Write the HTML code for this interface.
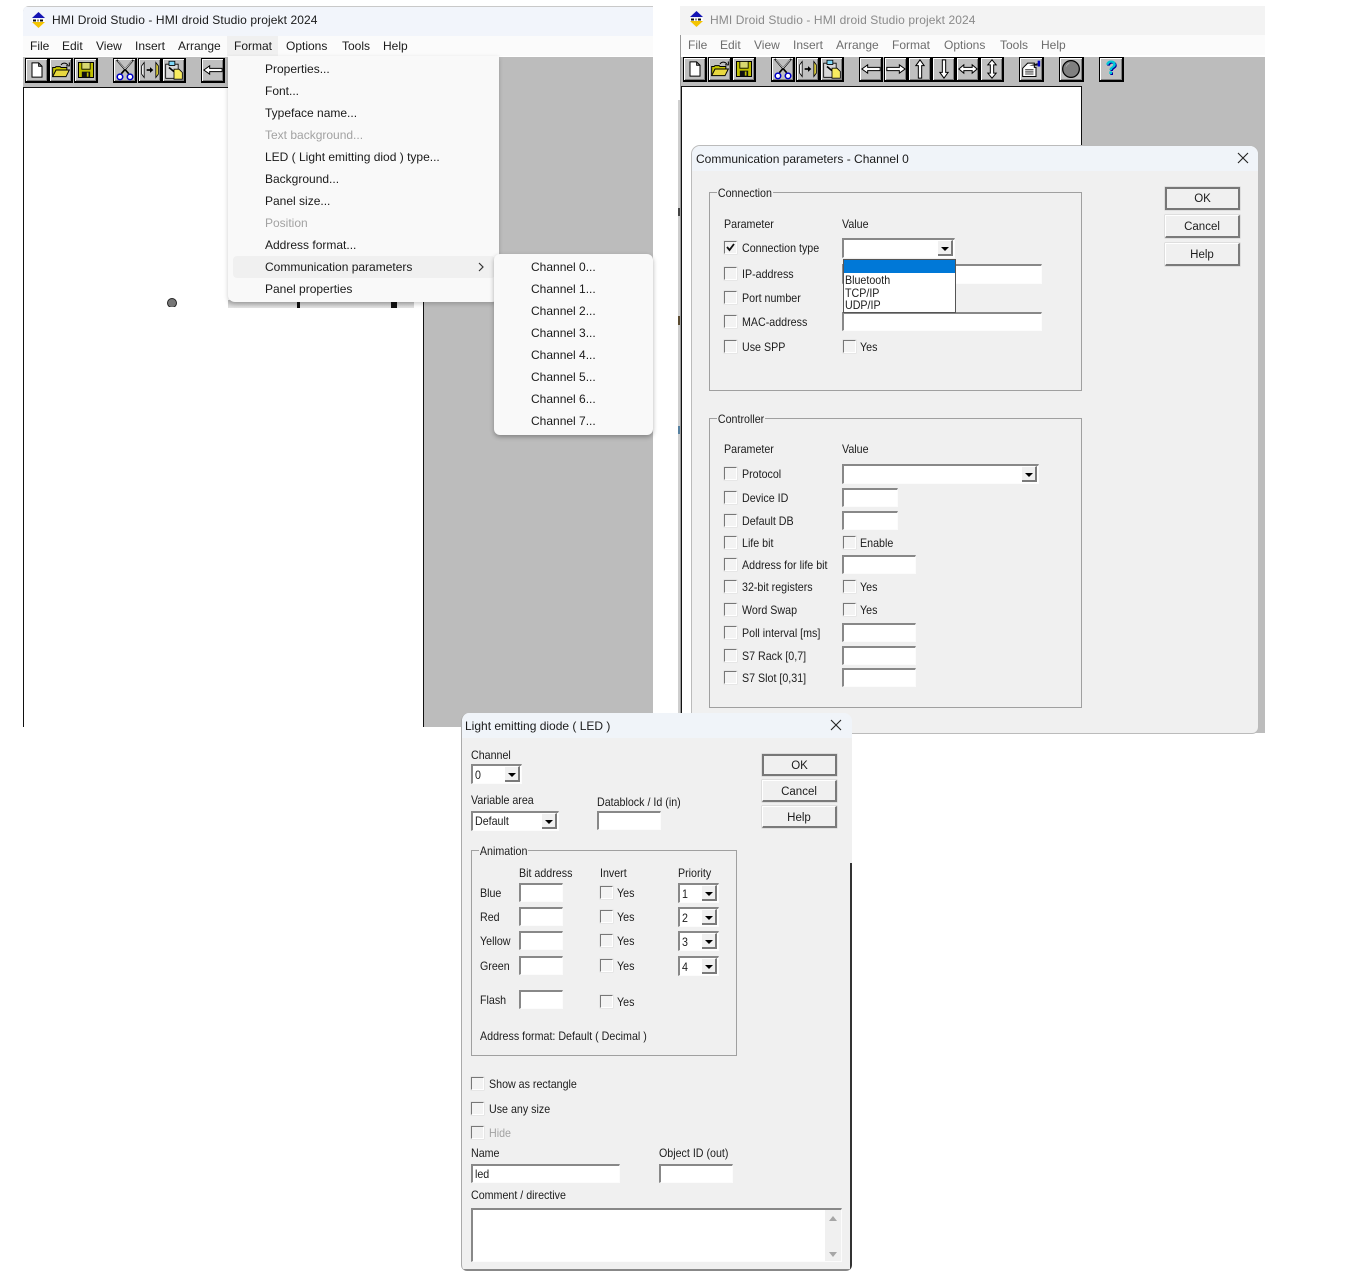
<!DOCTYPE html>
<html><head><meta charset="utf-8"><title>HMI Droid Studio</title>
<style>
html,body{margin:0;padding:0;background:#fff}
body{position:relative;width:1368px;height:1281px;overflow:hidden;font-family:"Liberation Sans",sans-serif;color:#111}
div,i,b,svg{position:absolute;display:block}
i{font-style:normal;font-size:12px;line-height:14px;white-space:nowrap;transform-origin:0 50%;transform:scaleX(.89);color:#1c1c1c}
i.m{font-size:12px;color:#1a1a1a;transform:none}
i.g{color:#6d6d6d}
i.d{color:#a2a2a2}
i.tt{letter-spacing:.1px}
.in{background:#fff;border-top:2px solid #888;border-left:2px solid #888;border-right:1px solid #fcfcfc;border-bottom:1px solid #fcfcfc;box-sizing:border-box}
.ar{right:1px;top:0;bottom:1px;width:15px;background:#f0f0f0;border-right:2px solid #7a7a7a;border-bottom:2px solid #7a7a7a;border-top:1px solid #fff;box-sizing:border-box}
.ar:after{content:"";position:absolute;left:3px;top:6px;border-left:4px solid transparent;border-right:4px solid transparent;border-top:4px solid #000}
.cb{width:13px;height:13px;box-sizing:border-box;background:#f3f3f3;border-top:1px solid #777;border-left:1px solid #777;border-right:1px solid #fff;border-bottom:1px solid #fff;box-shadow:0 0 0 .5px #ddd}
.grp{border:1px solid #a0a0a0;box-sizing:border-box}
i.lab{background:#f0f0f0;padding:0 1px}
.btn{background:#f0f0f0;border-top:1px solid #fff;border-left:1px solid #fff;border-right:2px solid #7a7a7a;border-bottom:2px solid #7a7a7a;box-sizing:border-box;box-shadow:0 0 0 .5px #ccc;text-align:center;font-size:11.5px;line-height:23px;color:#1c1c1c}
.ok{border:2px solid #777;line-height:21px}
.t{width:24px;height:25px;background:#c0c0c0;border:1px solid #000;border-right-width:2px;border-bottom-width:2px;box-sizing:border-box;box-shadow:inset 1px 1px 0 #fff,inset -1px -1px 0 #7f7f7f}
.t svg{left:1px;top:1px;width:20px;height:20px}
.t svg.big{left:0;top:0;width:22px;height:22px}
</style></head>
<body>
<svg width="0" height="0" style="left:0;top:0">
<defs>
<symbol id="new" viewBox="0 0 24 24"><path d="M6 3.500h8l4 4v13H6zM14 3.500v4h4" fill="#fff" stroke="#000" stroke-width="1.200"/></symbol>
<symbol id="open" viewBox="0 0 24 24"><path d="M2 20V9h3l1-1h5l1 1h7v3" fill="#c8c800" stroke="#000" stroke-width="1.200"/><path d="M2 20l4-8h16l-4 8z" fill="#e8d840" stroke="#000" stroke-width="1.200"/><path d="M12 6c2-3 6-3 8 0m2-3v4h-4" fill="none" stroke="#000" stroke-width="1.200"/></symbol>
<symbol id="save" viewBox="0 0 24 24"><path d="M3 3h18v18H3z" fill="#c0c000" stroke="#000" stroke-width="1.200"/><path d="M7 3h10v8H7z" fill="#d8d870" stroke="#000"/><path d="M7 14h10v7H7z" fill="#111"/><path d="M13 15h2v5h-2z" fill="#c0c000"/></symbol>
<symbol id="cut" viewBox="0 0 24 24"><path d="M3 1l13 15M21 1L8 16" stroke="#000" stroke-width="1.800" fill="none"/><path d="M4 2l8 9M20 2l-8 9" stroke="#fff" stroke-width=".7" fill="none"/><circle cx="6.500" cy="19.500" r="3" fill="#fff" stroke="#0000c8" stroke-width="1.700"/><circle cx="17.500" cy="19.500" r="3" fill="#fff" stroke="#0000c8" stroke-width="1.700"/></symbol>
<symbol id="align" viewBox="0 0 24 24"><path d="M5 3v18l-3-4V7z" fill="#fff" stroke="#000"/><path d="M19 3v18l3-4V7z" fill="#e8d840" stroke="#000"/><path d="M8 12h5" stroke="#000" stroke-width="2"/><path d="M12 8.500l4 3.500-4 3.500z" fill="#000"/></symbol>
<symbol id="paste" viewBox="0 0 24 24"><path d="M2 5h15v17H2z" fill="#d8d8d8" stroke="#000"/><path d="M6 1.500h7v5H6z" fill="#7fd8f8" stroke="#000"/><path d="M6 9l6 5" stroke="#000" stroke-width="2"/><path d="M12 11h6l4 4v8H12z" fill="#f8ec60" stroke="#000"/></symbol>
<symbol id="al" viewBox="0 0 24 24"><path d="M1 12l7-5v3h15v4H8v3z" fill="#fff" stroke="#000" stroke-width="1.200"/></symbol>
<symbol id="ar" viewBox="0 0 24 24"><path d="M23 12l-7-5v3H1v4h15v3z" fill="#fff" stroke="#000" stroke-width="1.200"/></symbol>
<symbol id="au" viewBox="0 0 24 24"><path d="M12 1L7 8h3v15h4V8h3z" fill="#fff" stroke="#000" stroke-width="1.200"/></symbol>
<symbol id="ad" viewBox="0 0 24 24"><path d="M12 23l-5-7h3V1h4v15h3z" fill="#fff" stroke="#000" stroke-width="1.200"/></symbol>
<symbol id="ah" viewBox="0 0 24 24"><path d="M1 12l6-5v3h10V7l6 5-6 5v-3H7v3z" fill="#fff" stroke="#000" stroke-width="1.200"/></symbol>
<symbol id="av" viewBox="0 0 24 24"><path d="M12 1L7 7h3v10H7l5 6 5-6h-3V7h3z" fill="#fff" stroke="#000" stroke-width="1.200"/></symbol>
<symbol id="prop" viewBox="0 0 24 24"><path d="M2 11l6-6h8v5h2v11H2z" fill="#fff" stroke="#000" stroke-width="1.200"/><path d="M5 13h10M5 15.500h10M5 18h10" stroke="#000"/><path d="M10 8l10-3v3z" fill="#111"/><path d="M20 2h3v7h-3z" fill="#0000c8"/></symbol>
<symbol id="circ" viewBox="0 0 24 24"><circle cx="12" cy="12" r="10" fill="#808080" stroke="#000" stroke-width="1.500"/><path d="M6 9c1-2 2-3 4-4" stroke="#bbb" fill="none"/></symbol>
<symbol id="logo" viewBox="0 0 15 16"><path d="M7.500 0L14 6H1z" fill="#1414b4"/><path d="M1 7h13v3H1z" fill="#fff"/><path d="M2 7.500h3v2H2zM9 7.500h3v2H9zM6.500 7.500h1v2h-1z" fill="#111"/><path d="M1 10h13L7.500 16z" fill="#f4c400"/></symbol>
</defs>
</svg>

<!-- WINDOW 1 -->
<div style="left:23px;top:6px;width:630px;height:721px;background:#bcbcbc;border-radius:6px 0 0 0;overflow:hidden">
 <div style="left:0;top:0;width:630px;height:30px;background:#f2f5fb;border-top:1px solid #c9c9c9;box-sizing:border-box"></div>
 <div style="left:0;top:30px;width:630px;height:20px;background:#fbfbfb"></div>
 <div style="left:0;top:50px;width:630px;height:1px;background:#fff"></div>
 <div style="left:0;top:81px;width:401px;height:640px;background:#fff;border-left:1px solid #111;border-top:1px solid #111;border-right:1px solid #111;box-sizing:border-box"></div>
 <div style="left:204px;top:30px;width:51px;height:20px;background:#f0f0f0"></div>
</div>
<svg style="left:31px;top:12px" width="15" height="16"><use href="#logo"/></svg>
<i class="m tt" style="left:52px;top:13px">HMI Droid Studio - HMI droid Studio projekt 2024</i>
<i class="m" style="left:30px;top:39px">File</i><i class="m" style="left:62px;top:39px">Edit</i><i class="m" style="left:96px;top:39px">View</i><i class="m" style="left:135px;top:39px">Insert</i><i class="m" style="left:178px;top:39px">Arrange</i><i class="m" style="left:234px;top:39px">Format</i><i class="m" style="left:286px;top:39px">Options</i><i class="m" style="left:342px;top:39px">Tools</i><i class="m" style="left:383px;top:39px">Help</i>

<div class="t" style="left:25px;top:58px"><svg><use href="#new"/></svg></div>
<div class="t" style="left:49px;top:58px"><svg><use href="#open"/></svg></div>
<div class="t" style="left:74px;top:58px"><svg><use href="#save"/></svg></div>
<div class="t" style="left:113px;top:58px"><svg class="big"><use href="#cut"/></svg></div>
<div class="t" style="left:138px;top:58px"><svg><use href="#align"/></svg></div>
<div class="t" style="left:162px;top:58px"><svg><use href="#paste"/></svg></div>
<div class="t" style="left:201px;top:58px"><svg><use href="#al"/></svg></div>

<!-- stray canvas marks below menu -->
<svg style="left:167px;top:298px" width="11" height="9"><circle cx="5" cy="5" r="4.500" fill="#777" stroke="#222"/></svg>
<div style="left:228px;top:300px;width:186px;height:8px;background:linear-gradient(#b8b8b8,#e4e4e4)"></div>
<div style="left:297px;top:302px;width:3px;height:6px;background:#111"></div>
<div style="left:391px;top:302px;width:6px;height:6px;background:#111"></div>

<!-- MENU -->
<div style="left:228px;top:56px;width:271px;height:246px;background:#f9f9f9;border-radius:0 0 7px 7px;box-shadow:0 2px 5px rgba(0,0,0,.2)"></div>
<div style="left:233px;top:256px;width:262px;height:22px;background:#f0f0f0;border-radius:4px"></div>
<i class="m" style="left:265px;top:62px">Properties...</i>
<i class="m" style="left:265px;top:84px">Font...</i>
<i class="m" style="left:265px;top:106px">Typeface name...</i>
<i class="m d" style="left:265px;top:128px">Text background...</i>
<i class="m" style="left:265px;top:150px">LED ( Light emitting diod ) type...</i>
<i class="m" style="left:265px;top:172px">Background...</i>
<i class="m" style="left:265px;top:194px">Panel size...</i>
<i class="m d" style="left:265px;top:216px">Position</i>
<i class="m" style="left:265px;top:238px">Address format...</i>
<i class="m" style="left:265px;top:260px">Communication parameters</i>
<i class="m" style="left:265px;top:282px">Panel properties</i>
<svg style="left:477px;top:262px" width="8" height="10"><path d="M2 1l4 4-4 4" fill="none" stroke="#333" stroke-width="1.200"/></svg>

<!-- SUBMENU -->
<div style="left:494px;top:254px;width:159px;height:181px;background:#f9f9f9;border-radius:6px;box-shadow:0 2px 5px rgba(0,0,0,.3)"></div>
<i class="m" style="left:531px;top:260px">Channel 0...</i>
<i class="m" style="left:531px;top:282px">Channel 1...</i>
<i class="m" style="left:531px;top:304px">Channel 2...</i>
<i class="m" style="left:531px;top:326px">Channel 3...</i>
<i class="m" style="left:531px;top:348px">Channel 4...</i>
<i class="m" style="left:531px;top:370px">Channel 5...</i>
<i class="m" style="left:531px;top:392px">Channel 6...</i>
<i class="m" style="left:531px;top:414px">Channel 7...</i>

<!-- WINDOW 2 -->
<div style="left:678px;top:100px;width:3px;height:633px;background:#cfcfcf"></div>
<div style="left:678px;top:208px;width:2px;height:8px;background:#444"></div>
<div style="left:678px;top:316px;width:2px;height:9px;background:#5a4a30"></div>
<div style="left:678px;top:426px;width:2px;height:8px;background:#5580a0"></div>
<div style="left:680px;top:6px;width:585px;height:727px;background:#bcbcbc;overflow:hidden">
 <div style="left:0;top:0;width:585px;height:29px;background:#f3f3f3"></div>
 <div style="left:0;top:29px;width:585px;height:20px;background:#fbfbfb"></div>
 <div style="left:0;top:49px;width:585px;height:2px;background:#fff"></div>
 <div style="left:1px;top:80px;width:401px;height:647px;background:#fff;border-top:1px solid #111;border-left:1px solid #111;border-right:1px solid #111;box-sizing:border-box"></div>
 <div style="left:0;top:29px;width:1px;height:698px;background:#999"></div>
</div>
<svg style="left:689px;top:11px" width="15" height="16"><use href="#logo"/></svg>
<i class="m tt" style="left:710px;top:13px;color:#8a8a8a">HMI Droid Studio - HMI droid Studio projekt 2024</i>
<i class="m g" style="left:688px;top:38px">File</i><i class="m g" style="left:720px;top:38px">Edit</i><i class="m g" style="left:754px;top:38px">View</i><i class="m g" style="left:793px;top:38px">Insert</i><i class="m g" style="left:836px;top:38px">Arrange</i><i class="m g" style="left:892px;top:38px">Format</i><i class="m g" style="left:944px;top:38px">Options</i><i class="m g" style="left:1000px;top:38px">Tools</i><i class="m g" style="left:1041px;top:38px">Help</i>

<div class="t" style="left:683px;top:57px"><svg><use href="#new"/></svg></div>
<div class="t" style="left:708px;top:57px"><svg><use href="#open"/></svg></div>
<div class="t" style="left:732px;top:57px"><svg><use href="#save"/></svg></div>
<div class="t" style="left:771px;top:57px"><svg class="big"><use href="#cut"/></svg></div>
<div class="t" style="left:796px;top:57px"><svg><use href="#align"/></svg></div>
<div class="t" style="left:820px;top:57px"><svg><use href="#paste"/></svg></div>
<div class="t" style="left:859px;top:57px"><svg><use href="#al"/></svg></div>
<div class="t" style="left:884px;top:57px"><svg><use href="#ar"/></svg></div>
<div class="t" style="left:908px;top:57px"><svg><use href="#au"/></svg></div>
<div class="t" style="left:932px;top:57px"><svg><use href="#ad"/></svg></div>
<div class="t" style="left:956px;top:57px"><svg><use href="#ah"/></svg></div>
<div class="t" style="left:980px;top:57px"><svg><use href="#av"/></svg></div>
<div class="t" style="left:1019px;top:57px;width:25px"><svg><use href="#prop"/></svg></div>
<div class="t" style="left:1059px;top:57px;width:25px"><svg><use href="#circ"/></svg></div>
<div class="t" style="left:1099px;top:57px;width:25px"><b style="left:0;top:0;width:22px;text-align:center;font-size:19px;line-height:22px;color:#00c8d8;text-shadow:1px 1px 0 #0000a0">?</b></div>

<!-- DIALOG COMM -->
<div style="left:692px;top:146px;width:566px;height:587px;background:#f0f0f0;border-radius:8px 8px 6px 6px;overflow:hidden;box-shadow:0 0 0 1px #bbb">
 <div style="left:0;top:0;width:566px;height:25px;background:#f0f4f9"></div>
</div>
<i class="m" style="left:696px;top:152px">Communication parameters - Channel 0</i>
<svg style="left:1237px;top:152px" width="12" height="12"><path d="M1 1l10 10M11 1L1 11" stroke="#222" stroke-width="1.100"/></svg>

<div class="grp" style="left:709px;top:192px;width:373px;height:199px"></div>
<i class="lab" style="left:717px;top:186px">Connection</i>
<i style="left:724px;top:217px">Parameter</i><i style="left:842px;top:217px">Value</i>
<div class="cb" style="left:724px;top:241px"></div>
<svg style="left:725px;top:242px" width="11" height="11"><path d="M2 5l2.500 3L9 2" fill="none" stroke="#111" stroke-width="1.800"/></svg>
<i style="left:742px;top:241px">Connection type</i>
<div class="cb" style="left:724px;top:267px"></div><i style="left:742px;top:267px">IP-address</i>
<div class="cb" style="left:724px;top:291px"></div><i style="left:742px;top:291px">Port number</i>
<div class="cb" style="left:724px;top:315px"></div><i style="left:742px;top:315px">MAC-address</i>
<div class="cb" style="left:724px;top:340px"></div><i style="left:742px;top:340px">Use SPP</i>
<div class="cb" style="left:843px;top:340px"></div><i style="left:860px;top:340px">Yes</i>
<div class="in" style="left:842px;top:264px;width:200px;height:20px"></div>
<div class="in" style="left:842px;top:312px;width:200px;height:19px"></div>
<div class="in" style="left:842px;top:238px;width:113px;height:20px"><div class="ar"></div></div>
<div style="left:843px;top:259px;width:113px;height:54px;background:#fff;border:1px solid #555;box-sizing:border-box"></div>
<div style="left:844px;top:260px;width:111px;height:13px;background:#0078d7"></div>
<i style="left:845px;top:273px">Bluetooth</i>
<i style="left:845px;top:286px">TCP/IP</i>
<i style="left:845px;top:298px">UDP/IP</i>

<div class="grp" style="left:709px;top:418px;width:373px;height:290px"></div>
<i class="lab" style="left:717px;top:412px">Controller</i>
<i style="left:724px;top:442px">Parameter</i><i style="left:842px;top:442px">Value</i>
<div class="cb" style="left:724px;top:467px"></div><i style="left:742px;top:467px">Protocol</i>
<div class="cb" style="left:724px;top:491px"></div><i style="left:742px;top:491px">Device ID</i>
<div class="cb" style="left:724px;top:514px"></div><i style="left:742px;top:514px">Default DB</i>
<div class="cb" style="left:724px;top:536px"></div><i style="left:742px;top:536px">Life bit</i>
<div class="cb" style="left:724px;top:558px"></div><i style="left:742px;top:558px">Address for life bit</i>
<div class="cb" style="left:724px;top:580px"></div><i style="left:742px;top:580px">32-bit registers</i>
<div class="cb" style="left:724px;top:603px"></div><i style="left:742px;top:603px">Word Swap</i>
<div class="cb" style="left:724px;top:626px"></div><i style="left:742px;top:626px">Poll interval [ms]</i>
<div class="cb" style="left:724px;top:649px"></div><i style="left:742px;top:649px">S7 Rack [0,7]</i>
<div class="cb" style="left:724px;top:671px"></div><i style="left:742px;top:671px">S7 Slot [0,31]</i>
<div class="in" style="left:842px;top:464px;width:197px;height:20px"><div class="ar"></div></div>
<div class="in" style="left:842px;top:488px;width:56px;height:19px"></div>
<div class="in" style="left:842px;top:511px;width:56px;height:19px"></div>
<div class="cb" style="left:843px;top:536px"></div><i style="left:860px;top:536px">Enable</i>
<div class="in" style="left:842px;top:555px;width:74px;height:19px"></div>
<div class="cb" style="left:843px;top:580px"></div><i style="left:860px;top:580px">Yes</i>
<div class="cb" style="left:843px;top:603px"></div><i style="left:860px;top:603px">Yes</i>
<div class="in" style="left:842px;top:623px;width:74px;height:19px"></div>
<div class="in" style="left:842px;top:646px;width:74px;height:19px"></div>
<div class="in" style="left:842px;top:668px;width:74px;height:19px"></div>

<div class="btn ok" style="left:1165px;top:187px;width:75px;height:23px">OK</div>
<div class="btn" style="left:1165px;top:215px;width:75px;height:23px">Cancel</div>
<div class="btn" style="left:1165px;top:243px;width:75px;height:23px">Help</div>

<!-- DIALOG LED -->
<div style="left:461px;top:713px;width:391px;height:558px;background:#f0f0f0;border-radius:8px 8px 6px 6px;overflow:hidden;border-left:1px solid #aaa;box-sizing:border-box">
 <div style="left:0;top:0;width:391px;height:25px;background:#f0f4f9"></div>
 <div style="left:388px;top:150px;width:2px;height:408px;background:#333"></div>
 <div style="left:0;top:556px;width:391px;height:2px;background:#888"></div>
</div>
<i class="m" style="left:465px;top:719px">Light emitting diode ( LED )</i>
<svg style="left:830px;top:719px" width="12" height="12"><path d="M1 1l10 10M11 1L1 11" stroke="#222" stroke-width="1.100"/></svg>

<i style="left:471px;top:748px">Channel</i>
<div class="in" style="left:471px;top:764px;width:51px;height:20px"><div class="ar"></div></div><i style="left:475px;top:768px">0</i>
<i style="left:471px;top:793px">Variable area</i>
<div class="in" style="left:471px;top:811px;width:88px;height:20px"><div class="ar"></div></div><i style="left:475px;top:814px">Default</i>
<i style="left:597px;top:795px">Datablock / Id (in)</i>
<div class="in" style="left:597px;top:811px;width:64px;height:19px"></div>
<div class="btn ok" style="left:762px;top:754px;width:75px;height:22px">OK</div>
<div class="btn" style="left:762px;top:780px;width:75px;height:22px">Cancel</div>
<div class="btn" style="left:762px;top:806px;width:75px;height:22px">Help</div>

<div class="grp" style="left:471px;top:850px;width:266px;height:206px"></div>
<i class="lab" style="left:479px;top:844px">Animation</i>
<i style="left:519px;top:866px">Bit address</i><i style="left:600px;top:866px">Invert</i><i style="left:678px;top:866px">Priority</i>
<i style="left:480px;top:886px">Blue</i><i style="left:480px;top:910px">Red</i><i style="left:480px;top:934px">Yellow</i><i style="left:480px;top:959px">Green</i><i style="left:480px;top:993px">Flash</i>
<div class="in" style="left:519px;top:883px;width:44px;height:19px"></div>
<div class="in" style="left:519px;top:907px;width:44px;height:19px"></div>
<div class="in" style="left:519px;top:931px;width:44px;height:19px"></div>
<div class="in" style="left:519px;top:956px;width:44px;height:19px"></div>
<div class="in" style="left:519px;top:990px;width:44px;height:19px"></div>
<div class="cb" style="left:600px;top:886px"></div><i style="left:617px;top:886px">Yes</i>
<div class="cb" style="left:600px;top:910px"></div><i style="left:617px;top:910px">Yes</i>
<div class="cb" style="left:600px;top:934px"></div><i style="left:617px;top:934px">Yes</i>
<div class="cb" style="left:600px;top:959px"></div><i style="left:617px;top:959px">Yes</i>
<div class="cb" style="left:600px;top:995px"></div><i style="left:617px;top:995px">Yes</i>
<div class="in" style="left:678px;top:883px;width:41px;height:20px"><div class="ar"></div></div><i style="left:682px;top:887px">1</i>
<div class="in" style="left:678px;top:907px;width:41px;height:20px"><div class="ar"></div></div><i style="left:682px;top:911px">2</i>
<div class="in" style="left:678px;top:931px;width:41px;height:20px"><div class="ar"></div></div><i style="left:682px;top:935px">3</i>
<div class="in" style="left:678px;top:956px;width:41px;height:20px"><div class="ar"></div></div><i style="left:682px;top:960px">4</i>
<i style="left:480px;top:1029px">Address format: Default ( Decimal )</i>

<div class="cb" style="left:471px;top:1077px"></div><i style="left:489px;top:1077px">Show as rectangle</i>
<div class="cb" style="left:471px;top:1102px"></div><i style="left:489px;top:1102px">Use any size</i>
<div class="cb" style="left:471px;top:1126px;background:#f0f0f0"></div><i class="d" style="left:489px;top:1126px">Hide</i>
<i style="left:471px;top:1146px">Name</i><i style="left:659px;top:1146px">Object ID (out)</i>
<div class="in" style="left:471px;top:1164px;width:149px;height:19px"></div><i style="left:475px;top:1167px">led</i>
<div class="in" style="left:659px;top:1164px;width:74px;height:19px"></div>
<i style="left:471px;top:1188px">Comment / directive</i>
<div class="in" style="left:471px;top:1208px;width:371px;height:54px"></div>
<div style="left:825px;top:1210px;width:16px;height:51px;background:#f0f0f0"></div>
<svg style="left:828px;top:1214px" width="10" height="44"><path d="M1 7l4-5 4 5zM1 38h8l-4 5z" fill="#a6a6a6"/></svg>
</body></html>
